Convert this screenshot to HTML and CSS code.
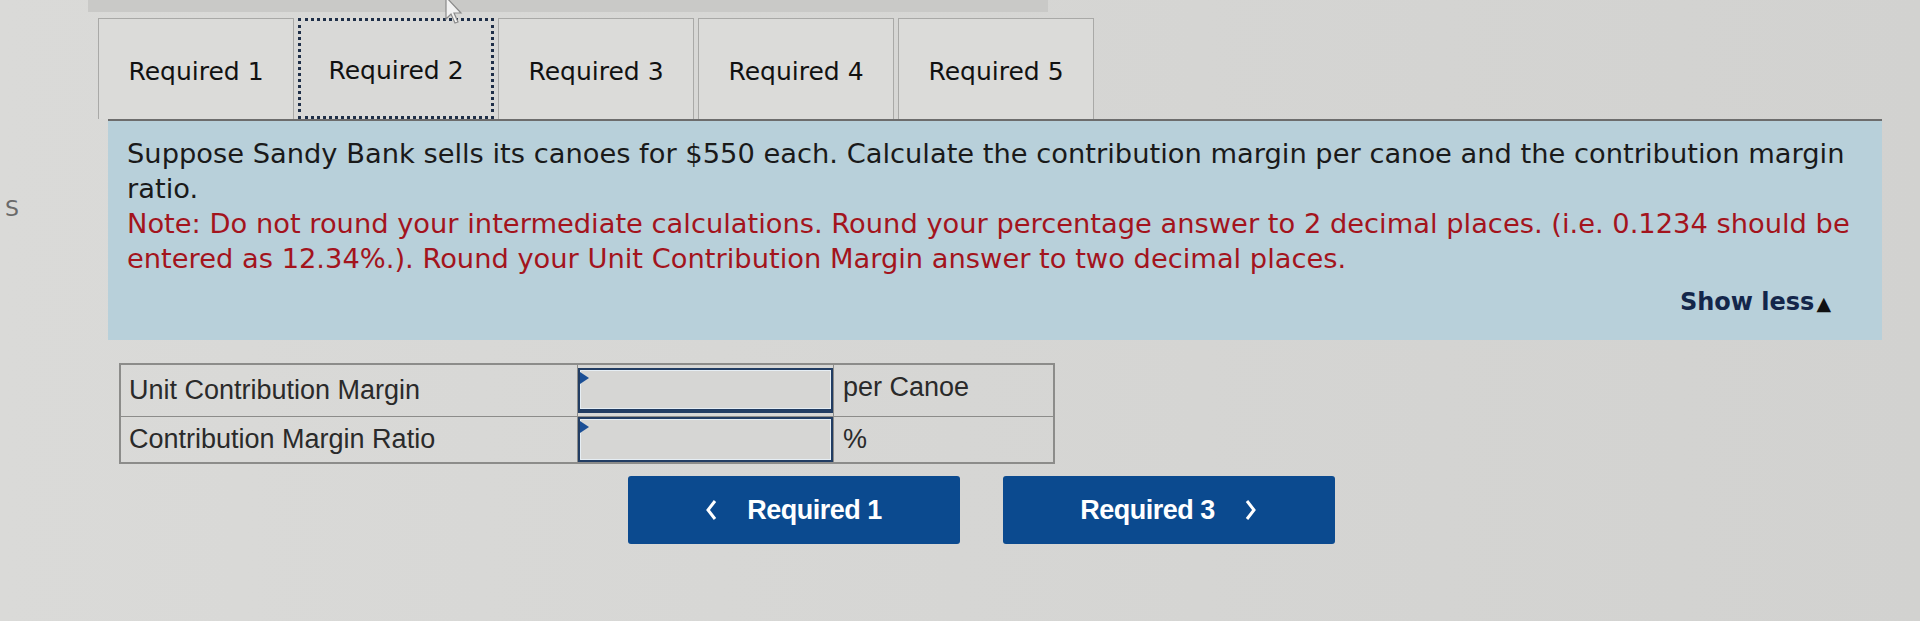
FILE: index.html
```html
<!DOCTYPE html>
<html lang="en">
<head>
    <meta charset="UTF-8">
    <meta name="viewport" content="width=device-width, initial-scale=1.0">
    <title>Required 2</title>
    <link rel="stylesheet" href="styles.css">
</head>
<body>
    <div class="topbar"></div>

    <div class="page">
        <div class="gutter"><span class="gutter-label">S</span></div>

        <main class="question">
            <div class="tabs">
                <button class="tab">Required 1</button>
                <button class="tab active">Required 2</button>
                <button class="tab">Required 3</button>
                <button class="tab">Required 4</button>
                <button class="tab">Required 5</button>
            </div>

            <div class="prompt">
                <p>Suppose Sandy Bank sells its canoes for $550 each. Calculate the contribution margin per canoe and the contribution margin ratio.</p>
                <p class="note">Note: Do not round your intermediate calculations. Round your percentage answer to 2 decimal places. (i.e. 0.1234 should be entered as 12.34%.). Round your Unit Contribution Margin answer to two decimal places.</p>
                <div class="toggle"><a href="#">Show less</a><span class="arrow">&#9650;</span></div>
            </div>

            <table class="answer">
                <tr class="first">
                    <td class="label">Unit Contribution Margin</td>
                    <td class="entry"><div class="field"></div></td>
                    <td class="unit">per Canoe</td>
                </tr>
                <tr>
                    <td class="label">Contribution Margin Ratio</td>
                    <td class="entry"><div class="field"></div></td>
                    <td class="unit">%</td>
                </tr>
            </table>

            <div class="nav">
                <button class="nav-btn">
                    <svg class="chevron" viewBox="0 0 12 22"><polyline points="10,2 3,11 10,20"/></svg>
                    Required 1
                </button>
                <button class="nav-btn">
                    Required 3
                    <svg class="chevron" viewBox="0 0 12 22"><polyline points="2,2 9,11 2,20"/></svg>
                </button>
            </div>
        </main>
    </div>

    <!-- mouse pointer resting over the tab strip -->
    <svg class="cursor" viewBox="0 0 24 30">
        <path d="M2 1 L2 23 L7 18 L11 27 L14 26 L10 17 L17 17 Z"/>
    </svg>
</body>
</html>
```

FILE: styles.css
```css
/* Page base */
body {
    margin: 0;
    background: linear-gradient(90deg, #dadad8 0%, #d6d6d4 50%, #d2d2d0 100%);
    font-family: "DejaVu Sans", Verdana, sans-serif;
    color: #1a1a1a;
    position: relative;
    height: 621px;
    overflow: hidden;
}

.topbar {
    margin-left: 88px;
    width: 960px;
    height: 12px;
    background-color: #c9c9c7;
}

.page {
    display: flex;
}

/* Cut-off column on the left edge */
.gutter {
    width: 98px;
    flex-shrink: 0;
}

.gutter-label {
    display: block;
    padding: 184px 0 0 5px;
    font-size: 22px;
    color: #6a6a6a;
}

.question {
    width: 1784px;
}

/* Tab strip */
.tabs {
    display: flex;
    gap: 4px;
    margin-top: 6px;
}

.tab {
    width: 196px;
    height: 101px;
    background-color: #dbdbd9;
    border: 1px solid #a9a9a7;
    border-bottom: none;
    font-family: "DejaVu Sans", Verdana, sans-serif;
    font-size: 25px;
    color: #111;
    padding: 4px 0 0;
    cursor: pointer;
}

.tab.active {
    border: 3px dotted #1f2f48;
    background-color: #d9d9d7;
}

/* Question text */
.prompt {
    margin-left: 10px;
    background-color: #b8d0da;
    border-top: 2px solid #6d6d6d;
    padding: 15px 8px 19px 19px;
}

.prompt p {
    margin: 0;
    font-size: 27.3px;
    line-height: 35px;
}

.note {
    color: #a3141d;
}

.toggle {
    margin-top: 8px;
    margin-right: 43px;
    text-align: right;
    line-height: 36px;
    font-size: 24px;
    font-weight: bold;
}

.toggle a {
    color: #13264a;
    text-decoration: none;
}

.arrow {
    font-size: 19px;
    color: #111;
    margin-left: 2px;
}

/* Answer grid */
.answer {
    margin: 23px 0 0 21px;
    border-collapse: collapse;
    border: 2px solid #8c8c8a;
    font-family: "Liberation Sans", Arial, sans-serif;
    font-size: 27px;
    color: #2a2a2a;
}

.answer td {
    border: 1px solid #8c8c8a;
    height: 45px;
    padding: 0;
}

.label {
    width: 448px;
    padding-left: 8px !important;
}

.entry {
    width: 255px;
}

.unit {
    width: 210px;
    padding-left: 9px !important;
}

.first .unit {
    padding-bottom: 6px !important;
}

.field {
    position: relative;
    height: 41px;
    border: 2px solid #223d63;
    box-shadow: inset 0 0 0 1px #e6eef4;
    background-color: #d6d6d4;
}

.first .field {
    border-bottom-width: 4px;
    height: 39px;
}

/* small flag in the corner of an answer box */
.field::before {
    content: "";
    position: absolute;
    top: 2px;
    left: 0;
    border-top: 6px solid transparent;
    border-bottom: 6px solid transparent;
    border-left: 9px solid #1b4f96;
}

/* Previous / next buttons */
.nav {
    display: flex;
    justify-content: center;
    gap: 43px;
    margin-top: 12px;
    padding-right: 18px;
}

.nav-btn {
    width: 332px;
    height: 68px;
    background-color: #0b4a8f;
    border: none;
    border-radius: 3px;
    color: #fff;
    font-family: "Liberation Sans", Arial, sans-serif;
    font-size: 27px;
    font-weight: bold;
    letter-spacing: -0.5px;
    display: flex;
    align-items: center;
    justify-content: center;
    gap: 30px;
    cursor: pointer;
}

.chevron {
    width: 12px;
    height: 22px;
    fill: none;
    stroke: #fff;
    stroke-width: 3;
}

.cursor {
    position: absolute;
    left: 444px;
    top: -4px;
    width: 24px;
    height: 30px;
    fill: #f2f2f2;
    stroke: #8a8a8a;
    stroke-width: 1.2;
}
```
